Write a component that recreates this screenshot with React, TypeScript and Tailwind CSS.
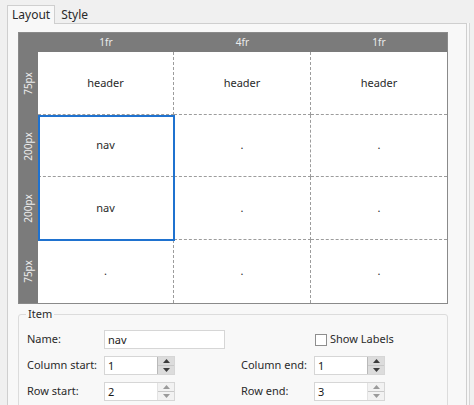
import { Fragment } from "react";

const cols = ["1fr", "4fr", "1fr"];
const rows = [
  { size: "75px", cells: ["header", "header", "header"] },
  { size: "200px", cells: ["nav", ".", "."] },
  { size: "200px", cells: ["nav", ".", "."] },
  { size: "75px", cells: [".", ".", "."] },
];

function Spinner({ active }: { active?: boolean }) {
  const arrow = active ? "#3c3c3c" : "#9a9a9a";
  return (
    <div
      className={`flex w-[17px] flex-col border-l ${
        active ? "border-[#b9b9b9] bg-[#dcdcdc]" : "border-[#e3e3e3] bg-[#f2f2f2]"
      }`}
    >
      <div className="flex flex-1 items-center justify-center border-b border-[#c8c8c8]">
        <svg width="7" height="4" viewBox="0 0 7 4">
          <path d="M0 4 L3.5 0 L7 4 Z" fill={arrow} />
        </svg>
      </div>
      <div className="flex flex-1 items-center justify-center">
        <svg width="7" height="4" viewBox="0 0 7 4">
          <path d="M0 0 L3.5 4 L7 0 Z" fill={arrow} />
        </svg>
      </div>
    </div>
  );
}

function NumberBox({ value, active }: { value: string; active?: boolean }) {
  return (
    <div className="flex h-[19px] w-[71px] border border-[#d6d6d6] bg-white">
      <div className="flex-1 pl-[3px] leading-[17px] text-[#1a1a1a]">{value}</div>
      <Spinner active={active} />
    </div>
  );
}

export default function App() {
  return (
    <div
      className="h-[405px] w-[474px] overflow-hidden bg-[#f0f0f0] text-[11px] text-[#2a2a2a]"
      style={{ fontFamily: '"Noto Sans", "Liberation Sans", sans-serif' }}
    >
      <div className="flex items-end pl-[7px] pt-[5px]">
        <div className="relative z-10 -mb-px h-[19px] border border-b-0 border-[#cfcfcf] bg-[#f8f8f8] px-[4px] leading-[18px] text-[12px]">
          Layout
        </div>
        <div className="h-[16px] px-[6px] leading-[15px] text-[12px]">Style</div>
      </div>

      <div className="ml-[7px] h-[400px] w-[460px] border border-[#cfcfcf] bg-[#f8f8f8] pl-[10px] pt-[8px] shadow-[2px_0_0_#f7f7f7,3px_0_0_#d6d6d6]">
        <div className="relative w-[430px] border border-[#8a8a8a] bg-[#7b7b7b]">
          <div className="grid grid-cols-[19px_136px_137px_136px] grid-rows-[19px_63px_62px_63px_63px]">
            <div />
            {cols.map((c, i) => (
              <div
                key={i}
                className="flex items-center justify-center text-[10px] text-[#ececec]"
              >
                {c}
              </div>
            ))}
            {rows.map((r, ri) => (
              <Fragment key={ri}>
                <div className="flex items-center justify-center">
                  <span className="-rotate-90 whitespace-nowrap text-[10px] text-[#ececec]">
                    {r.size}
                  </span>
                </div>
                {r.cells.map((cell, ci) => (
                  <div
                    key={ci}
                    className={`flex items-center justify-center bg-white border-dashed border-[#9c9c9c] ${
                      ci < 2 ? "border-r" : ""
                    } ${ri < 3 ? "border-b" : ""}`}
                  >
                    {cell}
                  </div>
                ))}
              </Fragment>
            ))}
          </div>
          {/* selected item outline */}
          <div className="absolute left-[19px] top-[82px] h-[126px] w-[137px] border-2 border-[#1f72cf]" />
        </div>

        <div className="relative mt-[10px] h-[120px] w-[430px] rounded-[3px] border border-[#dcdcdc]">
          <span className="absolute -top-[8px] left-[7px] bg-[#f8f8f8] px-[2px] leading-[14px]">
            Item
          </span>
          <div className="grid grid-cols-[214px_1fr] pl-[8px] pt-[15px]">
            <div className="flex flex-col gap-[7px]">
              <div className="flex h-[19px] items-center">
                <span className="w-[77px]">Name:</span>
                <div className="h-[19px] w-[121px] border border-[#d6d6d6] bg-white pl-[3px] leading-[17px] text-[#1a1a1a]">
                  nav
                </div>
              </div>
              <div className="flex h-[19px] items-center">
                <span className="w-[77px]">Column start:</span>
                <NumberBox value="1" active />
              </div>
              <div className="flex h-[19px] items-center">
                <span className="w-[77px]">Row start:</span>
                <NumberBox value="2" />
              </div>
            </div>
            <div className="flex flex-col gap-[7px]">
              <div className="flex h-[19px] items-center pl-[74px]">
                <span className="mr-[3px] h-[12px] w-[12px] border border-[#8e8e8e] bg-white" />
                <span>Show Labels</span>
              </div>
              <div className="flex h-[19px] items-center">
                <span className="w-[73px]">Column end:</span>
                <NumberBox value="1" active />
              </div>
              <div className="flex h-[19px] items-center">
                <span className="w-[73px]">Row end:</span>
                <NumberBox value="3" />
              </div>
            </div>
          </div>
        </div>
      </div>
    </div>
  );
}
